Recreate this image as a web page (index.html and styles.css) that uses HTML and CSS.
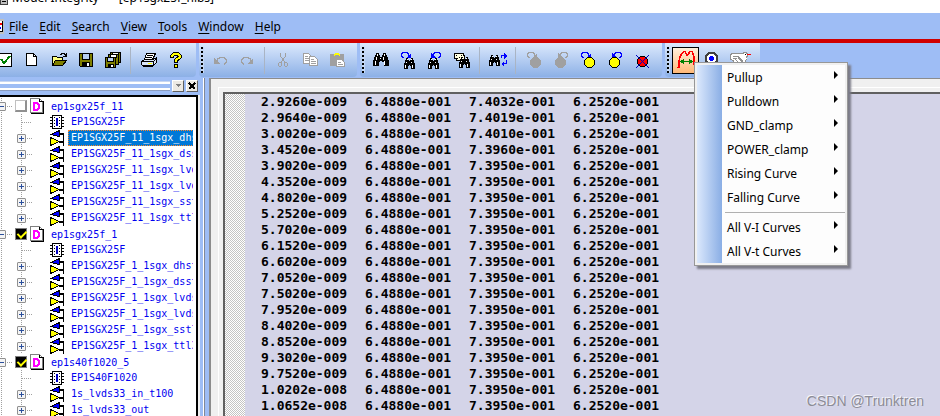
FILE: index.html
```html
<!DOCTYPE html>
<html lang="en">
<head>
    <meta charset="UTF-8">
    <meta name="viewport" content="width=device-width, initial-scale=1.0">
    <title>Model Integrity</title>
    <link rel="stylesheet" href="styles.css">
</head>
<body>

<svg class="defs" aria-hidden="true">
    <symbol id="i-check" viewBox="0 0 16 16">
        <path fill="#fff" stroke="#000" d="M1.5 1.5h13v13h-13z"/>
        <path fill="none" stroke="#008000" stroke-width="2" d="M4 7l3 4 6-7"/>
    </symbol>
    <symbol id="i-new" viewBox="0 0 16 16">
        <path fill="#fff" stroke="#000" d="M2.5 1.5h7l3 3v9h-10z"/>
        <path fill="none" stroke="#000" d="M9.5 1.5v3h3"/>
    </symbol>
    <symbol id="i-open" viewBox="0 0 16 16">
        <path fill="#ffff80" stroke="#000" d="M1.5 13V4.5h4l1 1h5V9"/>
        <path fill="#808000" stroke="#000" d="M1.5 13.5l3-5h11l-4 5z"/>
        <path fill="none" stroke="#000" d="M9 2.5h1v-1h3v1h1v1M15.5 1v4M12 4.5h4"/>
    </symbol>
    <symbol id="i-save" viewBox="0 0 16 16">
        <path fill="#808000" stroke="#000" d="M1.5 1.5h13v13h-12l-1-1z"/>
        <path fill="#b7cff2" stroke="#000" d="M4.5 1.5h7v6h-7z"/>
        <path d="M4 10h8v5H4z"/>
        <path fill="#fff" d="M9 11h2v3H9z"/>
    </symbol>
    <symbol id="i-saveall" viewBox="0 0 16 16">
        <path fill="#808000" stroke="#000" d="M5.5 .5h10v10h-10z"/>
        <path fill="#fff" stroke="#000" d="M7.5 .5h6v3h-6z"/>
        <path fill="#808000" stroke="#000" d="M3.5 2.5h10v10h-10z"/>
        <path fill="#fff" stroke="#000" d="M5.5 2.5h6v3h-6z"/>
        <path fill="#808000" stroke="#000" d="M.5 5.5h10v10h-10z"/>
        <path fill="#b7cff2" stroke="#000" d="M2.5 5.5h6v4h-6z"/>
        <path d="M3 12h6v4H3z"/>
        <path fill="#fff" d="M6 13h2v2H6z"/>
    </symbol>
    <symbol id="i-print" viewBox="0 0 16 16">
        <path fill="#fff" stroke="#000" d="M5.5 1.5h9l-3 6h-8z"/>
        <path stroke="#000" d="M6 3.5h6M5 5.5h6"/>
        <path fill="#d8e4f8" stroke="#000" d="M3.5 7.5h9l3-2v5l-3 3h-11l-1-1v-3z"/>
        <path fill="none" stroke="#000" d="M.5 9.5h12l3-3M12.5 9.5v4M2 14.5h10"/>
        <path fill="#ff0" d="M7 11h4v1H7z"/>
    </symbol>
    <symbol id="i-help" viewBox="0 0 16 16">
        <path fill="none" stroke="#000" stroke-width="4" d="M4 6V4l2-2h4l2 2v1L8 8v3M8 12v4"/>
        <path fill="none" stroke="#ff0" stroke-width="2" d="M4 5V4l2-2h4l2 2v1L8 8v2M8 13v2"/>
    </symbol>
    <symbol id="i-undo" viewBox="0 0 16 16">
        <path fill="none" stroke="#a0a0a0" d="M4 8.5h1v-2h2v-1h5v1h1v1h1v3h-1v1h-1v1"/>
        <path fill="#a0a0a0" d="M2 6v6h6z"/>
    </symbol>
    <symbol id="i-cut" viewBox="0 0 16 16">
        <path fill="none" stroke="#a0a0a0" d="M5.5 1v3l4 6M10.5 1v3l-4 6M4.5 10.5h2v3l-1 1h-1l-1-1v-2zM9.5 10.5h2l1 1v2l-1 1h-1l-1-1z"/>
    </symbol>
    <symbol id="i-copy" viewBox="0 0 16 16">
        <path fill="#fff" stroke="#a0a0a0" d="M1.5 1.5h5l3 3v7h-8z"/>
        <path stroke="#a0a0a0" d="M3 4.5h3M3 6.5h5M3 8.5h5"/>
        <path fill="#fff" stroke="#a0a0a0" d="M7.5 4.5h5l3 3v6h-8z"/>
        <path stroke="#a0a0a0" d="M9 7.5h3M9 9.5h5M9 11.5h5"/>
    </symbol>
    <symbol id="i-paste" viewBox="0 0 16 16">
        <path fill="#a0a0a0" d="M1 2h14v12H1z"/>
        <path fill="#ff0" d="M6 1h4v1h1v2h-1V3H6v1H5V2h1z"/>
        <path fill="#fff" stroke="#a0a0a0" d="M7.5 7.5h5l3 3v4h-8z"/>
        <path stroke="#a0a0a0" d="M9 10.5h3M9 12.5h5"/>
    </symbol>
    <symbol id="i-find" viewBox="0 0 16 14">
        <path d="M3 0h3v2h1v2h2V2h1V0h3v2h1v2h1v3h1v6h-5V9H9V8H7v1H6v4H0V7h1V4h1V2h1z"/>
        <path fill="#fff" d="M4 1h1v2H4zM11 1h1v2h-1zM3 4h1v3H3zM10 4h1v3h-1zM2 8h1v4H2zM11 8h1v4h-1zM7 5h1v1H7z"/>
    </symbol>
    <symbol id="i-find-small" viewBox="0 0 11 11">
        <path d="M2 0h2v2h1v1h1V2h1V0h2v2h1v3h1v6H7V8H6V7H5v1H4v3H0V5h1V2h1z"/>
        <path fill="#fff" d="M3 1h1v1H3zM7 1h1v1H7zM2 4h1v1H2zM7 4h1v1H7zM1 7h1v3H1zM8 7h1v3H8z"/>
    </symbol>
    <symbol id="i-arc" viewBox="0 0 11 6">
        <path fill="none" stroke="currentColor" d="M4 5.5H2.5v-1h-1v-3h1v-1h5v1h1v2"/>
        <path fill="currentColor" stroke="none" d="M11 1v5H6z"/>
    </symbol>
    <symbol id="i-findnext" viewBox="0 0 16 18">
        <use class="blue" href="#i-arc" x="0" y="1" width="11" height="6"/>
        <use href="#i-find-small" x="4" y="7" width="11" height="11"/>
    </symbol>
    <symbol id="i-findprev" viewBox="0 0 16 18">
        <use class="blue" href="#i-arc" x="-15" y="1" width="11" height="6" transform="scale(-1 1)"/>
        <use href="#i-find-small" x="1" y="7" width="11" height="11"/>
    </symbol>
    <symbol id="i-findfiles" viewBox="0 0 18 16">
        <path fill="#ffffe0" stroke="#000" d="M1.5 1.5h9v2h1v5h-8v-2h-2z"/>
        <path d="M3 3h1v1H3zM8 3h1v1H8zM4 6h1v1H4zM6 5h1v1H6z"/>
        <use href="#i-find-small" x="6" y="5" width="11" height="11"/>
    </symbol>
    <symbol id="i-replace" viewBox="0 0 18 16">
        <use href="#i-find-small" x="0" y="3" width="11" height="11"/>
        <path fill="none" stroke="#00f" d="M12.5 6V3.5h3M17.5 8v3.5h-3"/>
        <path fill="#00f" d="M15 1l3 3-3 3zM15 9v6l-3-3z"/>
    </symbol>
    <symbol id="i-marknext" viewBox="0 0 16 18">
        <use href="#i-arc" x="0" y="1" width="11" height="6"/>
        <path d="M7.5 6.5h4l3 3v4l-3 3h-4l-3-3v-4z"/>
    </symbol>
    <symbol id="i-markprev" viewBox="0 0 16 18">
        <use href="#i-arc" x="-16" y="1" width="11" height="6" transform="scale(-1 1)"/>
        <path d="M5.5 6.5h4l3 3v4l-3 3h-4l-3-3v-4z"/>
    </symbol>
    <symbol id="i-markclear" viewBox="0 0 16 16">
        <path fill="#f00" stroke="#000" d="M6.5 4.5h4l3 3v4l-3 3h-4l-3-3v-4z"/>
        <path stroke="#0000c0" d="M2 3l13 13M15 3L2 16"/>
    </symbol>
    <symbol id="i-curve" viewBox="0 0 20 20">
        <path fill="none" stroke="#f00" stroke-width="1.5" d="M1 17.5h2v-6l1-5 2-3 2-2h1l2 4 1-1 2-3h2l1 2 1 4v7"/>
        <path stroke="#008000" d="M5 11.5h11"/>
        <path fill="#008000" d="M4 11.5l4-3v6zM17 11.5l-4-3v6z"/>
    </symbol>
    <symbol id="i-probe" viewBox="0 0 20 16">
        <path fill="#fff" stroke="#404040" stroke-width="2" d="M6 1h5l3 3v5l-3 3H6L3 9V4z"/>
        <path fill="#00f" d="M7 4h3v1h1v3h-1v1H7V8H6V5h1z"/>
        <path fill="#800080" d="M18 11h1v1h-1z"/>
    </symbol>
    <symbol id="i-bird" viewBox="0 0 22 16">
        <path fill="#fff" stroke="#909090" d="M1.5 2.5l2-1h10l2-1h2l1 2-1 4-1 3 2 3-3 2h-6l-4-2-1-4-3-1z"/>
        <path fill="none" stroke="#909090" d="M4 4.5h5l5 5M6 7l6 6M9 6l5 5M4 7l4-1"/>
        <path stroke="#f00" d="M18 2.5h4"/>
        <path d="M16 2h1v1h-1z"/>
    </symbol>
    <symbol id="i-doc" viewBox="0 0 14 16">
        <path fill="#fff" stroke="#808080" d="M.5 .5h9l3 3v11H.5z"/>
        <path fill="none" stroke="#000" d="M9.5 .5v3h4M13.5 4v11.5H1"/>
        <path fill="none" stroke="#f0f" stroke-width="2" d="M4 5h3l2 2v3l-2 2H4z"/>
    </symbol>
    <symbol id="i-chip" viewBox="0 0 14 14">
        <path stroke="#000" d="M0 2.5h14M0 5.5h14M0 8.5h14M0 11.5h14"/>
        <path fill="#fff" stroke="#000" d="M2.5 .5h9v13h-9z"/>
        <path d="M4 2h1v1H4zM9 2h1v1H9zM4 5h1v1H4zM9 5h1v1H9zM4 8h1v1H4zM9 8h1v1H9zM4 11h1v1H4zM9 11h1v1H9z"/>
        <path fill="#0000c0" d="M6 3h2v8H6z"/>
    </symbol>
    <symbol id="i-buffer" viewBox="0 0 14 16">
        <path fill="#00f" stroke="#000" d="M1 4.5l8.5-4v6z"/>
        <path fill="#ff0" stroke="#000" d="M.5 7.5l8.5 4-8.5 4z"/>
        <path fill="none" stroke="#000" d="M9 3.5h4.5v12M9 11.5h4"/>
        <path d="M9 11h4v2H9zM10 3h3v2h-3z"/>
    </symbol>
</svg>

<header class="titlebar">
    <svg class="app-icon" viewBox="0 0 8 6"><path fill="#c0c0c0" stroke="#404040" d="M.5 0v4.5h7V0"/><path d="M2 1h4v1H2z"/></svg>
    <h1 class="title"><span>Model Integrity</span><span>-</span><span>[ep1sgx25f_nibs]</span></h1>
</header>

<nav class="menubar">
    <svg class="child-icon" viewBox="0 0 4 15"><path fill="#c0c0c0" d="M0 0h4v15H0z"/><path fill="#fff" d="M0 2h2v10H0z"/><path fill="#000" d="M2 2h1v11H0v-1h2z"/><path fill="#f00" d="M0 4h2v2H0z"/><path fill="#00f" d="M0 8h1v2H0z"/></svg>
    <button><u>F</u>ile</button>
    <button><u>E</u>dit</button>
    <button><u>S</u>earch</button>
    <button><u>V</u>iew</button>
    <button><u>T</u>ools</button>
    <button><u>W</u>indow</button>
    <button><u>H</u>elp</button>
</nav>

<div class="toolbars">
    <div class="toolbar toolbar-first">
        <button class="tool" aria-label="Check"><svg><use href="#i-check"/></svg></button>
        <button class="tool" aria-label="New"><svg><use href="#i-new"/></svg></button>
        <button class="tool" aria-label="Open"><svg><use href="#i-open"/></svg></button>
        <button class="tool" aria-label="Save"><svg><use href="#i-save"/></svg></button>
        <button class="tool" aria-label="Save all"><svg><use href="#i-saveall"/></svg></button>
        <span class="sep"></span>
        <button class="tool" aria-label="Print"><svg><use href="#i-print"/></svg></button>
        <button class="tool" aria-label="Help"><svg><use href="#i-help"/></svg></button>
    </div>
    <div class="toolbar">
        <span class="grip"></span>
        <button class="tool" aria-label="Undo" disabled><svg><use href="#i-undo"/></svg></button>
        <button class="tool flip" aria-label="Redo" disabled><svg><use href="#i-undo"/></svg></button>
        <span class="sep"></span>
        <button class="tool" aria-label="Cut" disabled><svg><use href="#i-cut"/></svg></button>
        <button class="tool" aria-label="Copy" disabled><svg><use href="#i-copy"/></svg></button>
        <button class="tool" aria-label="Paste" disabled><svg><use href="#i-paste"/></svg></button>
    </div>
    <div class="toolbar">
        <span class="grip"></span>
        <button class="tool" aria-label="Find"><svg class="short"><use href="#i-find"/></svg></button>
        <button class="tool" aria-label="Find next"><svg class="tall"><use href="#i-findnext"/></svg></button>
        <button class="tool" aria-label="Find previous"><svg class="tall"><use href="#i-findprev"/></svg></button>
        <button class="tool" aria-label="Find in files"><svg class="wide"><use href="#i-findfiles"/></svg></button>
        <span class="sep"></span>
        <button class="tool" aria-label="Replace"><svg class="wide"><use href="#i-replace"/></svg></button>
        <span class="sep"></span>
        <button class="tool mark" aria-label="Next mark" disabled><svg class="tall"><use href="#i-marknext"/></svg></button>
        <button class="tool mark" aria-label="Previous mark" disabled><svg class="tall"><use href="#i-markprev"/></svg></button>
        <button class="tool mark" aria-label="Next error"><svg class="tall"><use href="#i-marknext"/></svg></button>
        <button class="tool mark" aria-label="Previous error"><svg class="tall"><use href="#i-markprev"/></svg></button>
        <button class="tool" aria-label="Clear marks"><svg><use href="#i-markclear"/></svg></button>
    </div>
    <div class="toolbar">
        <span class="grip"></span>
        <button class="tool active" aria-label="View curve"><svg class="large"><use href="#i-curve"/></svg></button>
        <button class="tool" aria-label="Probe"><svg class="probe"><use href="#i-probe"/></svg></button>
        <button class="tool" aria-label="Bird"><svg class="bird"><use href="#i-bird"/></svg></button>

        <ul class="popup">
            <li><button>Pullup</button></li>
            <li><button>Pulldown</button></li>
            <li><button>GND_clamp</button></li>
            <li><button>POWER_clamp</button></li>
            <li><button>Rising Curve</button></li>
            <li><button>Falling Curve</button></li>
            <li class="line"></li>
            <li><button>All V-I Curves</button></li>
            <li><button>All V-t Curves</button></li>
        </ul>
    </div>
</div>

<div class="workspace">
    <aside class="dock">
        <div class="dock-head">
            <span class="dock-grip"></span>
            <button class="dock-btn" aria-label="Menu"><svg viewBox="0 0 8 8"><path fill="#808080" d="M1 2h6L4 5z"/></svg></button>
            <button class="dock-btn" aria-label="Close"><svg viewBox="0 0 8 8"><path stroke="#000" stroke-width="2" d="M1 1l6 6M7 1L1 7"/></svg></button>
        </div>
        <div class="tree" id="tree"></div>
    </aside>
    <main class="editor">
        <div class="page">
            <div class="gutter"></div>
            <table class="data"><tbody id="rows"></tbody></table>
        </div>
    </main>
</div>

<div class="watermark">CSDN @Trunktren</div>

<script>
    const models = [
        { name: 'ep1sgx25f_11', checked: false, part: 'EP1SGX25F', items: [
            'EP1SGX25F_11_1sgx_dhstl', 'EP1SGX25F_11_1sgx_dsstl', 'EP1SGX25F_11_1sgx_lvds',
            'EP1SGX25F_11_1sgx_lvds', 'EP1SGX25F_11_1sgx_sstl', 'EP1SGX25F_11_1sgx_ttl3'] },
        { name: 'ep1sgx25f_1', checked: true, part: 'EP1SGX25F', items: [
            'EP1SGX25F_1_1sgx_dhstl', 'EP1SGX25F_1_1sgx_dsstl', 'EP1SGX25F_1_1sgx_lvds',
            'EP1SGX25F_1_1sgx_lvds', 'EP1SGX25F_1_1sgx_sstl', 'EP1SGX25F_1_1sgx_ttl3'] },
        { name: 'ep1s40f1020_5', checked: true, part: 'EP1S40F1020', items: [
            '1s_lvds33_in_t100', '1s_lvds33_out'] }
    ];

    let html = '';
    models.forEach((m, n) => {
        html += `<div class="row parent"><button class="expander minus" aria-label="Collapse"></button><span class="dots"></span>
            <input type="checkbox" id="m${n}" ${m.checked ? 'checked' : ''}><svg class="doc"><use href="#i-doc"/></svg><label for="m${n}">${m.name}</label></div>`;
        html += `<div class="row child part"><span class="dots"></span><svg class="icon"><use href="#i-chip"/></svg><span class="name">${m.part}</span></div>`;
        m.items.forEach((item, i) => {
            const selected = n === 0 && i === 0 ? ' selected' : '';
            html += `<div class="row child"><button class="expander" aria-label="Expand"></button><span class="dots"></span>
                <svg class="icon"><use href="#i-buffer"/></svg><span class="name${selected}">${item}</span></div>`;
        });
    });
    document.getElementById('tree').innerHTML = html;

    const times = ['2.9260e-009', '2.9640e-009', '3.0020e-009', '3.4520e-009', '3.9020e-009', '4.3520e-009', '4.8020e-009',
        '5.2520e-009', '5.7020e-009', '6.1520e-009', '6.6020e-009', '7.0520e-009', '7.5020e-009', '7.9520e-009',
        '8.4020e-009', '8.8520e-009', '9.3020e-009', '9.7520e-009', '1.0202e-008', '1.0652e-008'];
    const typ = ['7.4032e-001', '7.4019e-001', '7.4010e-001', '7.3960e-001'];

    document.getElementById('rows').innerHTML = times.map((t, i) =>
        `<tr><td>${t}</td><td>6.4880e-001</td><td>${typ[i] || '7.3950e-001'}</td><td>6.2520e-001</td></tr>`).join('');
</script>
</body>
</html>
```
FILE: styles.css
```css
* {
    box-sizing: border-box;
}
body {
    margin: 0;
    height: 100vh;
    overflow: hidden;
    display: flex;
    flex-direction: column;
    background: #9ebdf5;
    font-family: "Noto Sans", sans-serif;
    font-size: 12px;
    color: #000;
}
button {
    margin: 0;
    padding: 0;
    border: none;
    background: none;
    font: inherit;
    color: inherit;
}
svg {
    display: block;
    flex: none;
    shape-rendering: crispEdges;
}
.defs {
    position: absolute;
    width: 0;
    height: 0;
}

/* title and menu */
.titlebar {
    flex: none;
    height: 13px;
    background: #fff;
    display: flex;
    align-items: flex-start;
}
.app-icon {
    width: 8px;
    height: 6px;
}
.title {
    margin: -12px 0 0 4px;
    display: flex;
    gap: 8px;
    font-size: 12px;
    font-weight: normal;
    line-height: 20px;
}
.menubar {
    flex: none;
    height: 30px;
    display: flex;
    align-items: center;
    gap: 11px;
    border-bottom: 4px solid #d00000;
}
.menubar button {
    padding-top: 1px;
    line-height: 20px;
}
.menubar u {
    text-underline-offset: 2px;
}
.child-icon {
    width: 4px;
    height: 15px;
    margin-right: -6px;
}

/* toolbars */
.toolbars {
    flex: none;
    height: 35px;
    display: flex;
    gap: 3px;
}
.toolbar {
    position: relative;
    height: 34px;
    display: flex;
    align-items: center;
    padding: 0 7px 0 2px;
    border-radius: 0 0 4px 4px;
    background: linear-gradient(#dce9fd, #8cb0e6);
}
.toolbar-first {
    margin-left: -9px;
    padding-left: 0;
}
.grip {
    width: 3px;
    height: 26px;
    margin-right: 2px;
    background: repeating-linear-gradient(#000 0 2px, #c5d8f5 2px 4px);
    border-right: 1px solid #c5d8f5;
}
.sep {
    width: 1px;
    height: 27px;
    margin: 0 4px;
    background: #a9b4c4;
}
.tool {
    width: 27px;
    height: 27px;
    display: flex;
    align-items: center;
    justify-content: center;
}
.tool svg {
    width: 16px;
    height: 16px;
}
.tool .short {
    height: 14px;
}
.tool .tall {
    height: 18px;
}
.tool .wide {
    width: 18px;
}
.tool .large {
    width: 20px;
    height: 20px;
}
.tool .probe {
    width: 20px;
}
.tool .bird {
    width: 22px;
}
.tool.flip svg {
    transform: scaleX(-1);
}
.tool.active {
    border: 1px solid #000;
    background: linear-gradient(#fff0dc, #ffb978);
}
.blue {
    color: #00f;
}
.mark {
    color: #00f;
    fill: #ff0;
    stroke: #000;
}
.mark:disabled {
    color: #a0a0a0;
    fill: #a0a0a0;
    stroke: #a0a0a0;
}

/* popup menu */
.popup {
    position: absolute;
    z-index: 2;
    top: 19px;
    left: 29px;
    width: 154px;
    margin: 0;
    padding: 2px 2px 2px 27px;
    list-style: none;
    border: 1px solid #979797;
    background: linear-gradient(90deg, #dbe8fc, #8aaee5) 2px 0 / 25px 100% no-repeat #fdfdfd;
    box-shadow: inset 0 0 0 2px #f0f0f0, 3px 3px 2px #7c7c88;
}
.popup button {
    width: 100%;
    height: 24px;
    padding: 0 7px 0 5px;
    display: flex;
    align-items: center;
    justify-content: space-between;
    text-align: left;
}
.popup button::after {
    content: "";
    margin-bottom: 4px;
    border: 4px solid transparent;
    border-left-color: #000;
    border-right: none;
}
.popup .line {
    height: 1px;
    margin: 3px 0 2px 3px;
    background: #b0b0b0;
}

/* left dock */
.workspace {
    flex: 1;
    min-height: 0;
    display: flex;
}
.dock {
    width: 200px;
    flex: none;
    display: flex;
    flex-direction: column;
}
.dock-head {
    height: 17px;
    padding: 2px 2px 3px 0;
    display: flex;
    align-items: center;
    gap: 2px;
}
.dock-grip {
    flex: 1;
    height: 8px;
    border: solid #fff;
    border-width: 2px 0;
    box-shadow: 0 1px #8a9cc0, 0 -1px #c8d6f0;
}
.dock-btn {
    width: 12px;
    height: 12px;
    background: #ece9e4;
    border: 1px solid #fff;
    border-right-color: #606060;
    border-bottom-color: #606060;
    display: flex;
    align-items: center;
    justify-content: center;
}
.dock-btn svg {
    width: 8px;
    height: 8px;
}
.tree {
    flex: 1;
    min-height: 0;
    overflow: hidden;
    margin-right: 2px;
    padding-top: 1px;
    background: #fff;
    border: solid #000;
    border-width: 2px 2px 0 0;
    box-shadow: 2px 0 #f0f0f0;
    font-family: "DejaVu Sans Mono", "Liberation Mono", monospace;
    font-size: 10px;
    color: #0000f0;
}
.row {
    height: 16px;
    margin-right: 3px;
    display: flex;
    align-items: center;
    overflow: hidden;
    white-space: nowrap;
    background: repeating-linear-gradient(#a0a0a0 0 1px, transparent 1px 2px) 1px 0 / 1px 100% no-repeat;
}
.row.child {
    padding-left: 17px;
    background: repeating-linear-gradient(#a0a0a0 0 1px, transparent 1px 2px) 1px 0 / 1px 100% no-repeat,
        repeating-linear-gradient(#a0a0a0 0 1px, transparent 1px 2px) 21px 0 / 1px 100% no-repeat;
}
.row.part {
    padding-left: 21px;
}
.expander {
    flex: none;
    width: 9px;
    height: 9px;
    border: 1px solid #909090;
    border-radius: 1px;
    background: linear-gradient(#2b4f9c, #2b4f9c) center / 5px 1px no-repeat,
        linear-gradient(#2b4f9c, #2b4f9c) center / 1px 5px no-repeat, #f4f4f4;
}
.expander.minus {
    margin-left: -3px;
    background: linear-gradient(#2b4f9c, #2b4f9c) center / 5px 1px no-repeat, #f4f4f4;
}
.dots {
    flex: none;
    width: 6px;
    height: 1px;
    background: repeating-linear-gradient(90deg, transparent 0 1px, #a0a0a0 1px 2px);
}
.part .dots {
    width: 11px;
}
.row input {
    flex: none;
    appearance: none;
    width: 12px;
    height: 12px;
    margin: 0 3px;
    border: 1px solid #c0c0c0;
    border-right: 2px solid #909090;
    border-bottom: 2px solid #909090;
    background: #fff;
}
.row input:checked {
    border: 1px solid #808080;
    background: #000;
}
.row input:checked::after {
    content: "";
    display: block;
    width: 4px;
    height: 7px;
    margin: 0 0 0 3px;
    border: solid #ff0;
    border-width: 0 2px 2px 0;
    transform: rotate(45deg);
}
.doc {
    width: 14px;
    height: 16px;
    margin-right: 7px;
}
.icon {
    width: 14px;
    height: 16px;
    margin: 0 4px 0 18px;
}
.name {
    flex: 1;
    height: 16px;
    padding-left: 3px;
    line-height: 15px;
}
.name.selected {
    padding-left: 2px;
    line-height: 13px;
    color: #fff;
    background: #0078d7;
    border: 1px dotted #ff8728;
}

/* editor */
.editor {
    flex: 1;
    min-width: 0;
    display: flex;
    margin-left: 9px;
    padding: 13px 0 0 12px;
    background: #f0f0f0;
    border: solid #8c8c8c;
    border-width: 1px 0 0 2px;
    box-shadow: -4px 0 #9ebdf5, -5px 0 #808898, -6px 0 #fff;
}
.page {
    flex: 1;
    min-width: 0;
    display: flex;
    overflow: hidden;
    background: #d4d4e8;
    border: solid #606060;
    border-width: 2px 0 0 2px;
    outline: 1px solid #fff;
    outline-offset: 4px;
}
.gutter {
    flex: none;
    width: 20px;
    background: repeating-conic-gradient(#c4c4c4 0 25%, #fff 0 50%) 0 0 / 2px 2px;
}
.data {
    align-self: flex-start;
    width: 416px;
    margin-left: 16px;
    table-layout: fixed;
    border-collapse: collapse;
    font-family: "DejaVu Sans Mono", monospace;
    font-size: 13px;
    font-weight: bold;
}
.data td {
    height: 16px;
    padding: 0;
    line-height: 16px;
}
.watermark {
    position: absolute;
    right: 16px;
    bottom: 6px;
    font-family: "Liberation Sans", sans-serif;
    font-size: 14px;
    line-height: 18px;
    color: #8c8c96;
    text-shadow: -1px -1px #f4f4fa;
}
```
